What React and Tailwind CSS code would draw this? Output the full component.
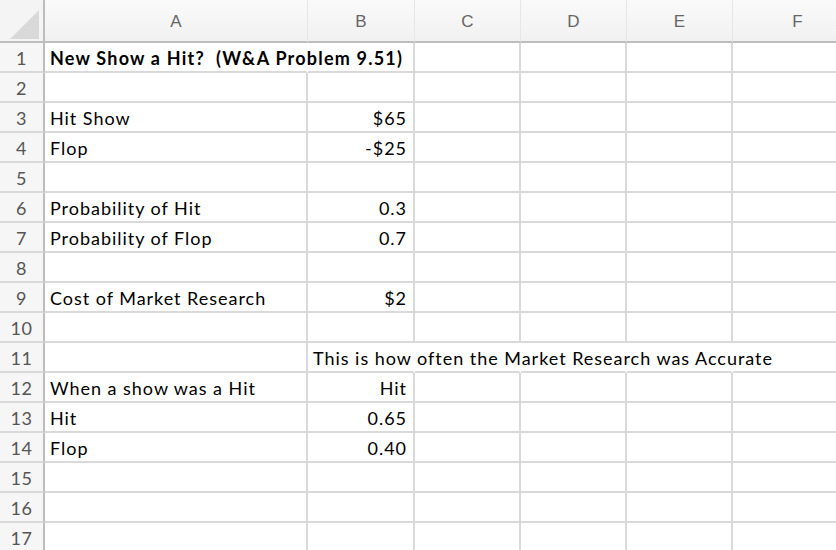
import React from 'react'

const cols = ['A', 'B', 'C', 'D', 'E', 'F']

// each row: cells for A..F. {t, r (right align), b (bold), noR (hide right border)}
const rows = [
  [{ t: 'New Show a Hit?  (W&A Problem 9.51)', b: true, noR: true }, {}, {}, {}, {}, {}],
  [{}, {}, {}, {}, {}, {}],
  [{ t: 'Hit Show' }, { t: '$65', r: true }, {}, {}, {}, {}],
  [{ t: 'Flop' }, { t: '-$25', r: true }, {}, {}, {}, {}],
  [{}, {}, {}, {}, {}, {}],
  [{ t: 'Probability of Hit' }, { t: '0.3', r: true }, {}, {}, {}, {}],
  [{ t: 'Probability of Flop' }, { t: '0.7', r: true }, {}, {}, {}, {}],
  [{}, {}, {}, {}, {}, {}],
  [{ t: 'Cost of Market Research' }, { t: '$2', r: true }, {}, {}, {}, {}],
  [{}, {}, {}, {}, {}, {}],
  [{}, { t: 'This is how often the Market Research was Accurate', noR: true }, { noR: true }, { noR: true }, { noR: true }, {}],
  [{ t: 'When a show was a Hit' }, { t: 'Hit', r: true }, {}, {}, {}, {}],
  [{ t: 'Hit' }, { t: '0.65', r: true }, {}, {}, {}, {}],
  [{ t: 'Flop' }, { t: '0.40', r: true }, {}, {}, {}, {}],
  [{}, {}, {}, {}, {}, {}],
  [{}, {}, {}, {}, {}, {}],
  [{}, {}, {}, {}, {}, {}],
]

const Cell = ({ c }) => (
  <div
    className={`relative h-[30px] border-b-2 border-[#d9d9d9] ${c.noR ? 'border-r-2 border-r-white' : 'border-r-2'}`}
  >
    {c.t && (
      <span
        className={`absolute top-[2px] bottom-0 flex items-center whitespace-pre z-10 text-[18px] text-black ${
          c.r ? 'right-[6px]' : 'left-[5px]'
        } ${c.b ? 'font-bold tracking-[1.2px]' : 'tracking-[0.97px]'}`}
      >
        {c.t}
      </span>
    )}
  </div>
)

export default function App() {
  return (
    <div className="w-[836px] h-[550px] overflow-hidden bg-white font-['Lato',sans-serif]">
      <div className="grid grid-cols-[45px_263px_107px_106px_106px_106px_130px]">
        {/* header row */}
        <div className="relative h-[43px] bg-[#f4f4f4] border-r-2 border-b-2 border-[#bdbdbd]">
          <svg className="absolute left-[10px] top-[10px]" width="29" height="29" viewBox="0 0 29 29">
            <polygon points="0,29 29,0 29,29" fill="#d9d9d9" />
          </svg>
        </div>
        {cols.map((l) => (
          <div
            key={l}
            className="h-[43px] flex items-center justify-center pt-[2px] bg-gradient-to-b from-[#fafafa] to-[#f1f1f1] border-b-2 border-[#bdbdbd] border-r border-r-[#e6e6e6] text-[17px] text-[#666] font-['Liberation_Sans',sans-serif]"
          >
            {l}
          </div>
        ))}

        {rows.map((row, i) => (
          <React.Fragment key={i}>
            <div className="h-[30px] flex items-center justify-center pt-[2px] bg-[#f6f6f6] border-r-2 border-r-[#bdbdbd] border-b-2 border-b-[#d9d9d9] text-[18px] tracking-[0.5px] text-[#555]">
              {i + 1}
            </div>
            {row.map((c, j) => (
              <Cell key={j} c={c} />
            ))}
          </React.Fragment>
        ))}
      </div>
    </div>
  )
}
